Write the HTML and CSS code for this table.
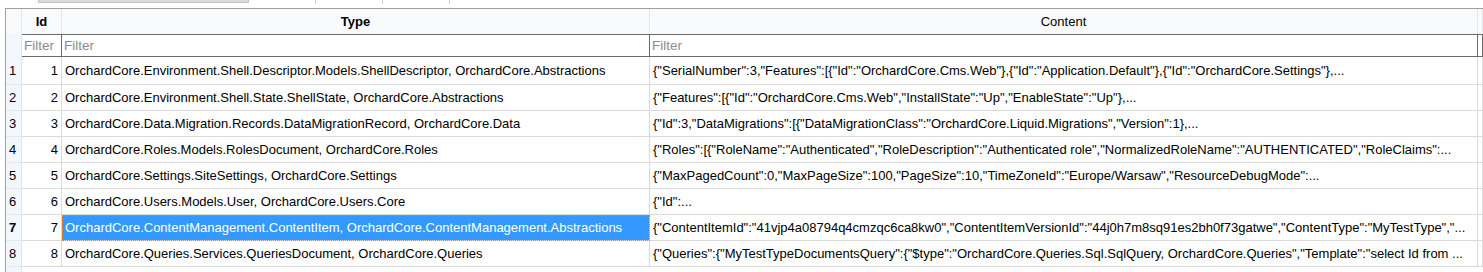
FILE: index.html
```html
<!DOCTYPE html>
<html lang="en">

<head>
    <meta charset="UTF-8">
    <title>Browse Data - Document</title>
    <link rel="stylesheet" href="styles.css">
</head>

<body>
    <!-- barra de ferramentas (cortada) -->
    <div class="toolbar">
        <span class="tool-scroll"></span>
        <span class="tool-btn"></span>
        <span class="tool-btn"></span>
        <span class="tool-btn"></span>
    </div>

    <!-- grade de dados -->
    <div class="grid">
        <table>
            <colgroup>
                <col class="col-num">
                <col class="col-id">
                <col class="col-type">
                <col class="col-content">
                <col class="col-extra">
            </colgroup>
            <thead>
                <tr class="head">
                    <th class="num"></th>
                    <th class="bold">Id</th>
                    <th class="bold">Type</th>
                    <th>Content</th>
                    <th></th>
                </tr>
                <tr class="filters">
                    <th class="num"></th>
                    <th><input type="text" placeholder="Filter"></th>
                    <th><input type="text" placeholder="Filter"></th>
                    <th><input type="text" placeholder="Filter"></th>
                    <th><input type="text" placeholder="Filter"></th>
                </tr>
            </thead>
            <tbody id="rows"></tbody>
        </table>
    </div>

    <script>
        const rows = [
            ['OrchardCore.Environment.Shell.Descriptor.Models.ShellDescriptor, OrchardCore.Abstractions',
                '{"SerialNumber":3,"Features":[{"Id":"OrchardCore.Cms.Web"},{"Id":"Application.Default"},{"Id":"OrchardCore.Settings"},...'],
            ['OrchardCore.Environment.Shell.State.ShellState, OrchardCore.Abstractions',
                '{"Features":[{"Id":"OrchardCore.Cms.Web","InstallState":"Up","EnableState":"Up"},...'],
            ['OrchardCore.Data.Migration.Records.DataMigrationRecord, OrchardCore.Data',
                '{"Id":3,"DataMigrations":[{"DataMigrationClass":"OrchardCore.Liquid.Migrations","Version":1},...'],
            ['OrchardCore.Roles.Models.RolesDocument, OrchardCore.Roles',
                '{"Roles":[{"RoleName":"Authenticated","RoleDescription":"Authenticated role","NormalizedRoleName":"AUTHENTICATED","RoleClaims":...'],
            ['OrchardCore.Settings.SiteSettings, OrchardCore.Settings',
                '{"MaxPagedCount":0,"MaxPageSize":100,"PageSize":10,"TimeZoneId":"Europe/Warsaw","ResourceDebugMode":...'],
            ['OrchardCore.Users.Models.User, OrchardCore.Users.Core',
                '{"Id":...'],
            ['OrchardCore.ContentManagement.ContentItem, OrchardCore.ContentManagement.Abstractions',
                '{"ContentItemId":"41vjp4a08794q4cmzqc6ca8kw0","ContentItemVersionId":"44j0h7m8sq91es2bh0f73gatwe","ContentType":"MyTestType","...'],
            ['OrchardCore.Queries.Services.QueriesDocument, OrchardCore.Queries',
                '{"Queries":{"MyTestTypeDocumentsQuery":{"$type":"OrchardCore.Queries.Sql.SqlQuery, OrchardCore.Queries","Template":"select Id from ...']
        ];
        const current = 7; // linha selecionada

        const tbody = document.getElementById('rows');
        rows.forEach((r, i) => {
            const n = i + 1;
            const tr = document.createElement('tr');
            tr.className = n === current ? 'row current' : 'row';
            tr.innerHTML = `
                <td class="num">${n}</td>
                <td class="id">${n}</td>
                <td class="${n === current ? 'selected' : ''}"></td>
                <td></td>
                <td></td>
            `;
            tr.children[2].textContent = r[0];
            tr.children[3].textContent = r[1];
            tbody.appendChild(tr);
        });

        // espaço vazio abaixo da última linha
        const filler = document.createElement('tr');
        filler.className = 'filler';
        filler.innerHTML = '<td class="num"></td><td></td><td></td><td></td><td></td>';
        tbody.appendChild(filler);
    </script>
</body>

</html>
```

FILE: styles.css
```css
/* RESET */
* {
    margin: 0;
    padding: 0;
    box-sizing: border-box;
}

body {
    font-family: 'Liberation Sans', Arial, sans-serif;
    font-size: 13px;
    color: #000;
    background: #fff;
    height: 272px;
    overflow: hidden;
}

/* BARRA DE FERRAMENTAS */
.toolbar {
    height: 8px;
    display: flex;
    align-items: flex-start;
}

.tool-scroll {
    width: 211px;
    height: 3px;
    margin-left: 38px;
    background: #dadada;
    border: 1px solid #c4c4c4;
    border-top: none;
}

.tool-btn {
    width: 1px;
    height: 4px;
    background: #cfcfcf;
    margin-left: 66px;
}

.tool-btn:first-of-type {
    margin-left: 98px;
}

/* GRADE */
.grid {
    margin-left: 5px;
    border-left: 1px solid #a0a0a0;
    border-top: 1px solid #a0a0a0;
    height: 264px;
    overflow: hidden;
}

table {
    width: 1477px;
    table-layout: fixed;
    border-collapse: separate;
    border-spacing: 0;
}

.col-num { width: 16px; }
.col-id { width: 40px; }
.col-type { width: 588px; }
.col-content { width: 828px; }
.col-extra { width: 5px; }

th,
td {
    white-space: nowrap;
    overflow: hidden;
    text-align: left;
    font-weight: normal;
    vertical-align: middle;
}

/* CABEÇALHO */
.head th {
    height: 25px;
    background: #f9fafb;
    border-right: 1px solid #e3e7ec;
    text-align: center;
    padding-bottom: 1px;
}

.head th.bold {
    font-weight: bold;
}

.filters th {
    height: 23px;
    border-top: 1px solid #6b6b6b;
    border-bottom: 1px solid #6b6b6b;
    border-right: 1px solid #6b6b6b;
    background: #fff;
}

.filters th.num {
    border-top: none;
    border-bottom: none;
    border-right: 1px solid #dde5ef;
    background: #f3f6fb;
}

.filters input {
    width: 100%;
    height: 21px;
    border: none;
    outline: none;
    padding: 0 2px;
    font-family: inherit;
    font-size: 13.5px;
    background: transparent;
}

.filters input::placeholder {
    color: #8c8c8c;
}

/* LINHAS */
.row td {
    height: 26px;
    padding: 0 3px 0 3px;
    border-right: 1px solid #dadada;
    border-bottom: 1px solid #dadada;
}

.row:first-child td {
    height: 28px;
}

td.num {
    background: #f3f6fb;
    border-right: 1px solid #dde5ef;
    border-bottom-color: #e2e8f0;
    padding-left: 3px;
}

.current td.num {
    font-weight: bold;
}

td.id {
    text-align: right;
}

td.selected {
    background: #3399ff;
    color: #fff;
    outline: 1px dotted #d9863c;
    outline-offset: -1px;
}

.filler td {
    height: 20px;
}

.filler td.num {
    border-bottom: none;
}
```
